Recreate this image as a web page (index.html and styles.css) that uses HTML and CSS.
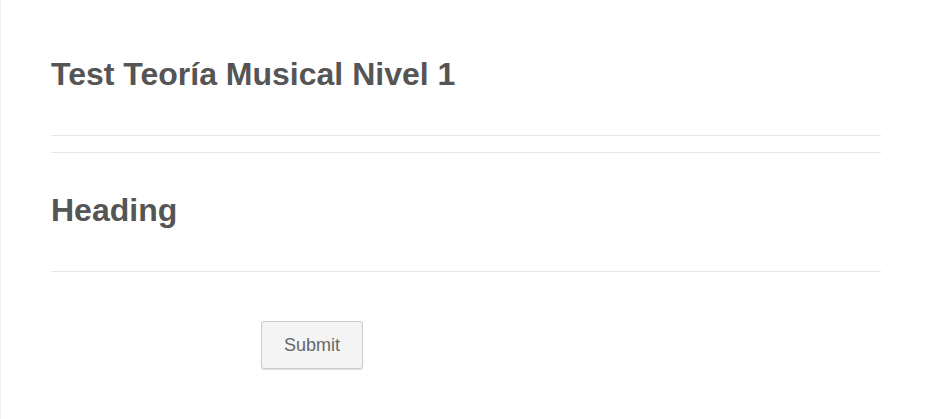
FILE: index.html
```html
<!DOCTYPE html>
<html lang="es">
  <head>
    <meta charset="UTF-8" />
    <meta name="viewport" content="width=device-width, initial-scale=1.0" />
    <title>Test Teoría Musical Nivel 1</title>
    <link rel="stylesheet" href="styles.css">
  </head>
  <body>
    <form class="form-all">
      <ul class="form-section">
        <li class="form-line form-header">
          <h1 class="form-title">Test Teoría Musical Nivel 1</h1>
        </li>
        <li class="form-line form-header">
          <h2 class="form-title">Heading</h2>
        </li>
        <li class="form-line form-buttons">
          <button type="submit" class="form-submit">Submit</button>
        </li>
      </ul>
    </form>
  </body>
</html>
```

FILE: styles.css
```css
:root {
  --text: #555555;
  --line: #e6e6e6;
  --button-bg: #f4f4f4;
  --button-border: #cccccc;
}

* {
  margin: 0;
  padding: 0;
  box-sizing: border-box;
}

body {
  background-color: #ffffff;
  color: var(--text);
  font-family: "Liberation Sans", Arial, sans-serif;
  border-left: 1px solid #f2f2f2;
  min-height: 100vh;
}

.form-all {
  width: 830px;
  margin-left: 50px;
}

.form-section {
  list-style: none;
}

.form-header {
  border-top: 1px solid var(--line);
  border-bottom: 1px solid var(--line);
  padding: 38px 0 41px;
}

.form-header:first-child {
  border-top: none;
  padding-top: 55px;
  padding-bottom: 42px;
  margin-bottom: 16px;
}

.form-title {
  font-size: 32px;
  font-weight: 700;
  line-height: 1.2;
}

.form-buttons {
  padding: 49px 0 0 210px;
}

.form-submit {
  font-family: inherit;
  font-size: 18px;
  line-height: 20px;
  color: #666666;
  padding: 13px 22px;
  background-color: var(--button-bg);
  border: 1px solid var(--button-border);
  border-radius: 3px;
  box-shadow: 0 1px 1px rgba(0, 0, 0, 0.12);
  cursor: pointer;
}
```
